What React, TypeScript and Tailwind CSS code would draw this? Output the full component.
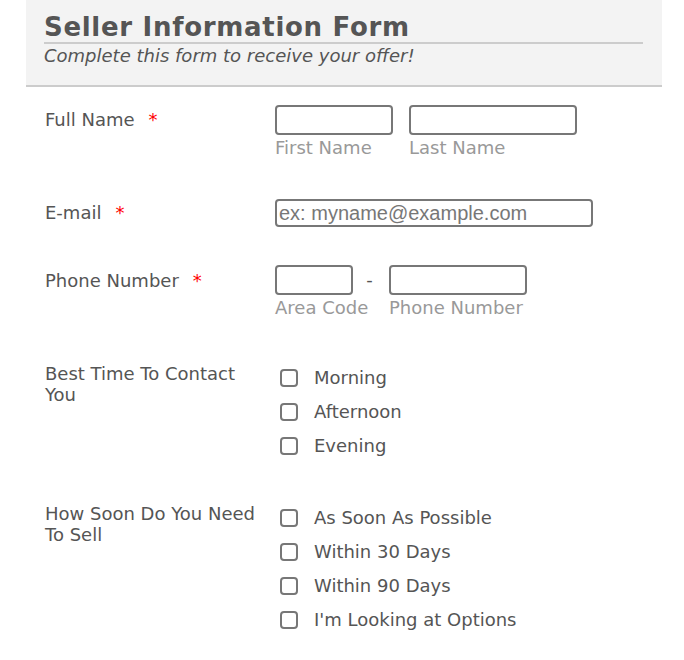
import React from 'react';

const font = { fontFamily: '"DejaVu Sans", Verdana, sans-serif' };

function Label({ text, required }: { text: React.ReactNode; required?: boolean }) {
  return (
    <div className="w-[230px] shrink-0 pr-3 text-[18px] leading-[21px] text-[#555]">
      {text}
      {required && <span className="ml-[14px] text-[#f00]">*</span>}
    </div>
  );
}

function Box({ className }: { className: string }) {
  return (
    <input
      type="text"
      className={`block rounded-[4px] border-2 border-[#777] bg-white outline-none ${className}`}
    />
  );
}

function Option({ label }: { label: string }) {
  return (
    <label className="flex h-[34px] items-center">
      <span className="ml-[5px] mt-[2px] block h-[18px] w-[18px] rounded-[4px] border-2 border-[#777] bg-white" />
      <span className="ml-[16px] text-[18px] leading-[21px] text-[#555]">{label}</span>
    </label>
  );
}

export default function App() {
  return (
    <div className="min-h-[660px] w-[684px] bg-white" style={font}>
      {/* Header */}
      <div className="ml-[26px] w-[636px] border-b-2 border-[#ccc] bg-[#f3f3f3] pl-[18px] pr-[19px] pt-[12px]">
        <h1 className="border-b-2 border-[#ccc] text-[26px] font-bold leading-[30px] tracking-[0.7px] text-[#555]">
          Seller Information Form
        </h1>
        <p className="pt-[1px] pb-[19px] text-[18px] italic leading-[21px] text-[#555]">
          Complete this form to receive your offer!
        </p>
      </div>

      <div className="pl-[45px]">
        {/* Full name */}
        <div className="mt-[18px] flex">
          <div className="pt-[4px]">
            <Label text="Full Name" required />
          </div>
          <div className="flex gap-[16px]">
            <div>
              <Box className="h-[30px] w-[118px]" />
              <div className="mt-[2px] text-[18px] leading-[21px] text-[#999]">First Name</div>
            </div>
            <div>
              <Box className="h-[30px] w-[168px]" />
              <div className="mt-[2px] text-[18px] leading-[21px] text-[#999]">Last Name</div>
            </div>
          </div>
        </div>

        {/* Email */}
        <div className="mt-[41px] flex">
          <div className="pt-[3px]">
            <Label text="E-mail" required />
          </div>
          <input
            type="text"
            placeholder="ex: myname@example.com"
            className="block h-[28px] w-[318px] rounded-[4px] border-2 border-[#777] bg-white px-[2px] text-[20px] leading-[24px] text-[#555] outline-none placeholder:text-[#777]"
            style={{ fontFamily: '"Liberation Sans", Arial, sans-serif' }}
          />
        </div>

        {/* Phone */}
        <div className="mt-[38px] flex">
          <div className="pt-[5px]">
            <Label text="Phone Number" required />
          </div>
          <div className="flex">
            <div className="w-[78px]">
              <Box className="h-[30px] w-[78px]" />
              <div className="mt-[2px] whitespace-nowrap text-[18px] leading-[21px] text-[#999]">Area Code</div>
            </div>
            <div className="ml-[13px] mr-[16px] w-[7px] pt-[4px] text-center text-[18px] leading-[21px] text-[#555]">-</div>
            <div>
              <Box className="h-[30px] w-[138px]" />
              <div className="mt-[2px] whitespace-nowrap text-[18px] leading-[21px] text-[#999]">Phone Number</div>
            </div>
          </div>
        </div>

        {/* Best time */}
        <div className="mt-[42px] flex">
          <div className="pt-[3px]">
            <Label text="Best Time To Contact You" />
          </div>
          <div>
            <Option label="Morning" />
            <Option label="Afternoon" />
            <Option label="Evening" />
          </div>
        </div>

        {/* How soon */}
        <div className="mt-[38px] flex">
          <div className="pt-[3px]">
            <Label text="How Soon Do You Need To Sell" />
          </div>
          <div>
            <Option label="As Soon As Possible" />
            <Option label="Within 30 Days" />
            <Option label="Within 90 Days" />
            <Option label="I'm Looking at Options" />
          </div>
        </div>
      </div>
    </div>
  );
}
